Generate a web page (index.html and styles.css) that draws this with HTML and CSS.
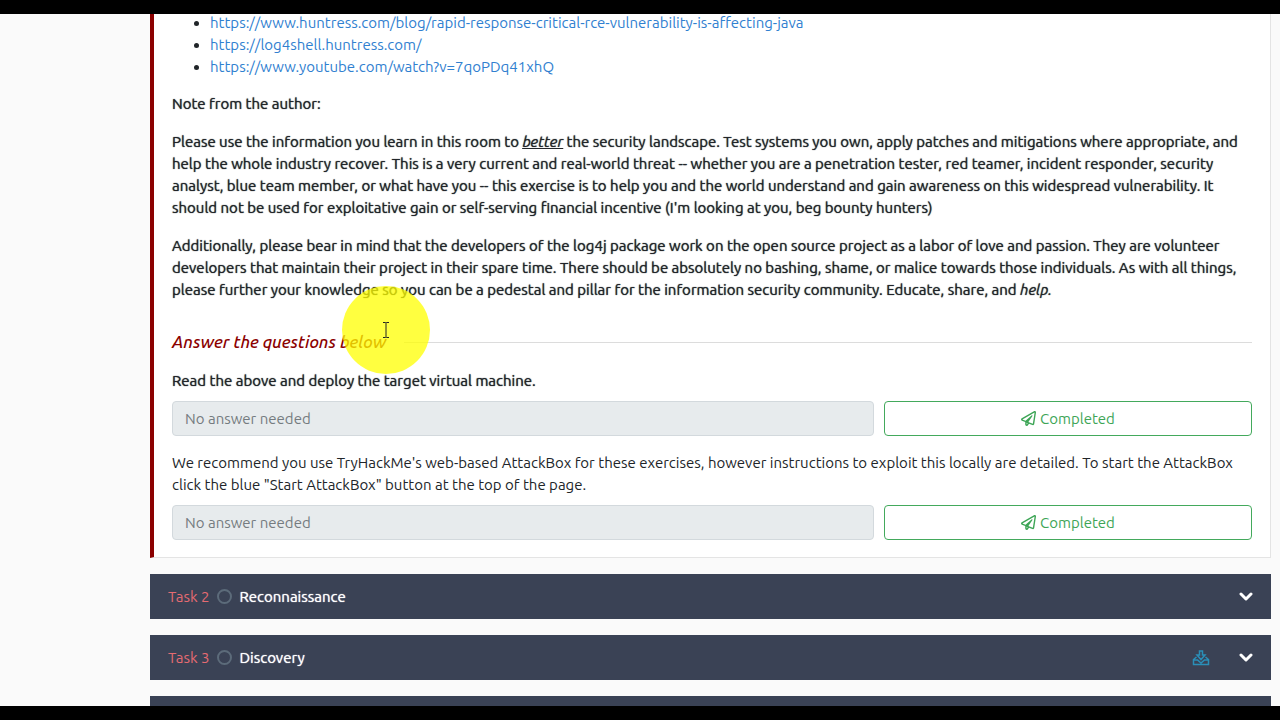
FILE: index.html
```html
<!DOCTYPE html>
<html lang="en">
<head>
  <meta charset="UTF-8">
  <meta name="viewport" content="width=device-width, initial-scale=1.0">
  <title>Room Tasks</title>
  <link rel="stylesheet" href="styles.css">
</head>
<body>
  <main class="room">
    <section class="task-body">
      <ul class="links">
        <li><a href="https://www.huntress.com/blog/rapid-response-critical-rce-vulnerability-is-affecting-java">https://www.huntress.com/blog/rapid-response-critical-rce-vulnerability-is-affecting-java</a></li>
        <li><a href="https://log4shell.huntress.com/">https://log4shell.huntress.com/</a></li>
        <li><a href="https://www.youtube.com/watch?v=7qoPDq41xhQ">https://www.youtube.com/watch?v=7qoPDq41xhQ</a></li>
      </ul>

      <div class="note">
        <p>Note from the author:</p>
        <p>Please use the information you learn in this room to <em><u>better</u></em> the security landscape. Test systems you own, apply patches and mitigations where appropriate, and
          help the whole industry recover. This is a very current and real-world threat -- whether you are a penetration tester, red teamer, incident responder, security
          analyst, blue team member, or what have you -- this exercise is to help you and the world understand and gain awareness on this widespread vulnerability. It
          should not be used for exploitative gain or self-serving financial incentive (I'm looking at you, beg bounty hunters)</p>
        <p>Additionally, please bear in mind that the developers of the log4j package work on the open source project as a labor of love and passion. They are volunteer
          developers that maintain their project in their spare time. There should be absolutely no bashing, shame, or malice towards those individuals. As with all things,
          please further your knowledge so you can be a pedestal and pillar for the information security community. Educate, share, and <em>help.</em></p>
      </div>

      <h2 class="questions-title">
        <span>Answer the questions below</span>
        <span class="cursor">
          <svg width="8" height="16" viewBox="0 0 8 16" fill="none" stroke="#222" aria-hidden="true">
            <path d="M1 .5h2.500l.5.500.5-.5H7M4 1v14M1 15.500h2.500l.5-.5.5.5H7"/>
          </svg>
        </span>
      </h2>

      <form class="question">
        <label class="bold" for="answer-1">Read the above and deploy the target virtual machine.</label>
        <div class="answer-row">
          <input type="text" id="answer-1" placeholder="No answer needed" disabled>
          <button type="button">
            <svg width="15" height="15" viewBox="0 0 512 512" aria-hidden="true"><use href="#plane"/></svg>
            Completed
          </button>
        </div>
      </form>

      <form class="question">
        <label for="answer-2">We recommend you use TryHackMe's web-based AttackBox for these exercises, however instructions to exploit this locally are detailed. To start the AttackBox
          click the blue "Start AttackBox" button at the top of the page.</label>
        <div class="answer-row">
          <input type="text" id="answer-2" placeholder="No answer needed" disabled>
          <button type="button">
            <svg width="15" height="15" viewBox="0 0 512 512" aria-hidden="true"><use href="#plane"/></svg>
            Completed
          </button>
        </div>
      </form>
    </section>

    <section class="task">
      <span class="task-number">Task 2</span>
      <span class="status"></span>
      <h3>Reconnaissance</h3>
      <svg class="chevron" width="14" height="10" viewBox="0 0 14 10" aria-hidden="true"><path d="M2 2l5 5 5-5"/></svg>
    </section>

    <section class="task">
      <span class="task-number">Task 3</span>
      <span class="status"></span>
      <h3>Discovery</h3>
      <svg class="download" width="18" height="16" viewBox="0 0 18 16" aria-hidden="true">
        <path d="M7.500 1h3v4H13L9 9.500 5 5h2.500zM4.500 7L1.500 9.500v5h15v-5L13.500 7M1.500 10h4L9 13l3.500-3h4"/>
      </svg>
      <svg class="chevron" width="14" height="10" viewBox="0 0 14 10" aria-hidden="true"><path d="M2 2l5 5 5-5"/></svg>
    </section>

    <section class="task"></section>
  </main>

  <svg class="sprite" aria-hidden="true">
    <defs>
      <!-- outlined paper plane -->
      <path id="plane" d="M440 6.500L24 246.100c-34.400 19.900-31.100 70.800 5.700 85.900L144 379.600V464c0 46.400 59.200 65.500 86.600 28.600l43.800-59.100 111.900 46.200c5.900 2.400 12.100 3.600 18.300 3.600 8.200 0 16.300-2.100 23.600-6.200 12.800-7.200 21.600-20 23.900-34.500l59.400-387.200c6.100-40.100-36.900-68.800-71.500-48.900zM192 464v-64.600l36.600 15.100L192 464zm212.600-28.700l-153.800-63.500L391 169.500c10.700-15.500-9.500-33.500-23.700-21.200L155.800 332.600 48 288 464 48l-59.400 387.300z"/>
    </defs>
  </svg>
</body>
</html>
```
FILE: styles.css
```css
* {
  box-sizing: border-box;
}

body {
  font-family: Ubuntu, "Noto Sans", sans-serif;
  font-size: 15px;
  line-height: 22px;
  color: #212529;
  background-color: #fafafa;
  margin: 0;
  height: 100vh;
  overflow: hidden;
  border-top: 14px solid #000;
  border-bottom: 14px solid #000;
}

.room {
  margin: 0 9px 0 150px;
}

.task-body {
  display: flow-root;
  background-color: #fff;
  border: 1px solid #e4e4e4;
  border-top: none;
  border-left: 4px solid #8b0000;
  padding: 0 18px 1px;
}

.links {
  margin: -2px 0 15px;
  padding-left: 38px;
}

a {
  color: #3080d0;
  text-decoration: none;
}

p {
  margin: 0 0 16px;
}

.note,
.bold,
h3 {
  text-shadow: 0 0 1px currentColor;
}

.questions-title {
  display: flex;
  align-items: center;
  gap: 18px;
  position: relative;
  margin: 30px 0 17px;
  font-size: 17px;
  font-style: italic;
  font-weight: 500;
  color: #8b0000;
}

.questions-title::after {
  content: "";
  flex: 1;
  height: 1px;
  background-color: #dcdcdc;
}

/* highlighted mouse pointer over the heading */
.cursor {
  position: absolute;
  left: 170px;
  top: -45px;
  width: 88px;
  height: 88px;
  border-radius: 50%;
  background-color: rgba(255, 255, 0, 0.75);
  display: flex;
  align-items: center;
  justify-content: center;
}

.question {
  margin-bottom: 16px;
}

.question label {
  display: block;
  margin-bottom: 9px;
}

.answer-row {
  display: grid;
  grid-template-columns: 702fr 368fr;
  gap: 10px;
}

input,
button {
  height: 35px;
  padding: 0 12px;
  border-radius: 4px;
  font-family: inherit;
  font-size: 15px;
}

input {
  border: 1px solid #d3d9dd;
  background-color: #e7ebed;
}

input::placeholder {
  color: #757b80;
}

button {
  display: flex;
  align-items: center;
  justify-content: center;
  gap: 4px;
  border: 1px solid #43a95c;
  background-color: #fff;
  color: #3da556;
}

button svg {
  fill: #3da556;
}

.task {
  display: flex;
  align-items: center;
  height: 45px;
  margin-top: 16px;
  padding: 0 18px;
  background-color: #3a4255;
}

.task-number {
  color: #e56b72;
}

.status {
  width: 15px;
  height: 15px;
  margin: 0 7px 0 8px;
  border: 2px solid #5c6b7a;
  border-radius: 50%;
}

h3 {
  margin: 0 auto 0 0;
  font-size: 15px;
  font-weight: 400;
  color: #fff;
}

.chevron {
  fill: none;
  stroke: #fff;
  stroke-width: 3;
  stroke-linecap: round;
  stroke-linejoin: round;
}

.download {
  margin-right: 29px;
  fill: none;
  stroke: #2a8fb8;
  stroke-width: 1.5;
}

.sprite {
  display: none;
}
```
